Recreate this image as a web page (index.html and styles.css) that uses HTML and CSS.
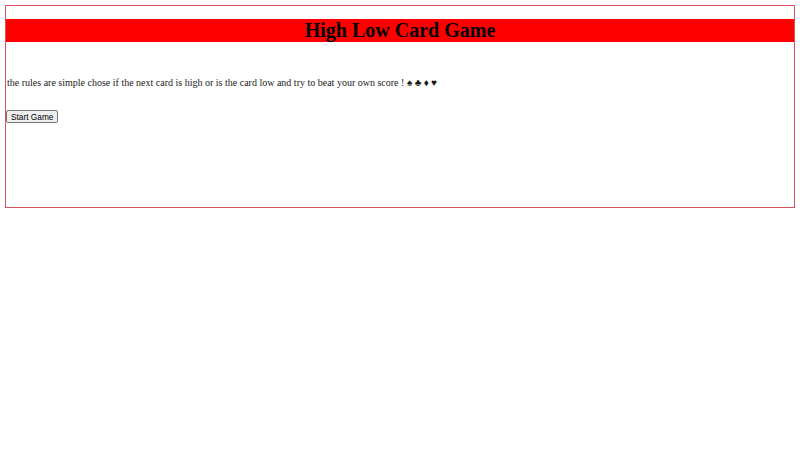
FILE: index.html
```html
<!DOCTYPE html>
<html lang="en">
<head>
    <meta charset="UTF-8">
    <meta name="viewport" content="width=device-width, initial-scale=1.0">
    <title>High Low Card Game</title>
    <link rel="stylesheet" href="styles.css">
</head>
<body>
    <div class="game">
        <h1 class="title">High Low Card Game</h1>
        <p class="rules">the rules are simple chose if the next card is high or is the card low and try to beat your own score ! &#9824; &#9827; &#9830; &#9829;</p>
        <button class="start" onclick="startGame()">Start Game</button>
    </div>

    <script>
        function startGame() {
            document.querySelector(".start").textContent = "Start Game";
        }
    </script>
</body>
</html>
```

FILE: styles.css
```css
body {
    margin: 5px;
    font-family: "Liberation Serif", "Times New Roman", serif;
    color: #000;
    background-color: #fff;
}
.game {
    border: 1px solid #da5460;
    min-height: 201px;
}
.title {
    margin: 13px 0 0;
    background-color: #ff0000;
    text-align: center;
    font-size: 20px;
    line-height: 23px;
    font-weight: bold;
}
.rules {
    margin: 35px 0 0;
    padding-left: 1px;
    font-size: 10px;
    line-height: 12px;
    color: #1a1a1a;
}
.start {
    display: block;
    margin-top: 21px;
    font-family: "Liberation Sans", Arial, sans-serif;
    font-size: 8.3px;
    height: 13px;
    padding: 0 4px;
    line-height: 10px;
    border: 1px solid #767676;
    border-radius: 2px;
    background-color: #efefef;
    color: #000;
}
```
